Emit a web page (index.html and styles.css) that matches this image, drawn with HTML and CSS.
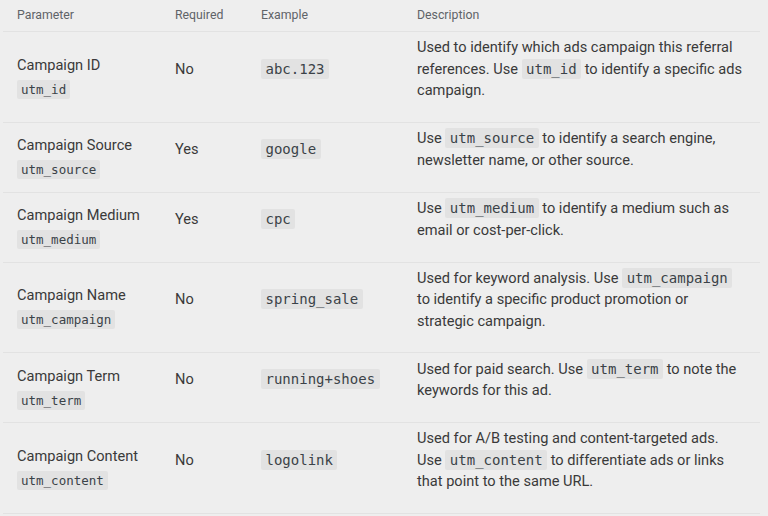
FILE: index.html
```html
<!DOCTYPE html>
<html lang="en">
<head>
<meta charset="utf-8">
<title>Campaign URL parameters</title>
<link rel="stylesheet" href="styles.css">
</head>
<body>
<table class="params">
  <colgroup>
    <col class="c-param">
    <col class="c-req">
    <col class="c-ex">
    <col class="c-desc">
  </colgroup>
  <thead>
    <tr>
      <th>Parameter</th>
      <th>Required</th>
      <th>Example</th>
      <th>Description</th>
    </tr>
  </thead>
  <tbody>
    <tr>
      <td class="param"><div class="name">Campaign ID</div><div class="key"><code>utm_id</code></div></td>
      <td>No</td>
      <td><code class="ex">abc.123</code></td>
      <td>Used to identify which ads campaign this referral references. Use <code>utm_id</code> to identify a specific ads campaign.</td>
    </tr>
    <tr>
      <td class="param"><div class="name">Campaign Source</div><div class="key"><code>utm_source</code></div></td>
      <td>Yes</td>
      <td><code class="ex">google</code></td>
      <td>Use <code>utm_source</code> to identify a search engine, newsletter name, or other source.</td>
    </tr>
    <tr>
      <td class="param"><div class="name">Campaign Medium</div><div class="key"><code>utm_medium</code></div></td>
      <td>Yes</td>
      <td><code class="ex">cpc</code></td>
      <td>Use <code>utm_medium</code> to identify a medium such as email or cost-per-click.</td>
    </tr>
    <tr>
      <td class="param"><div class="name">Campaign Name</div><div class="key"><code>utm_campaign</code></div></td>
      <td>No</td>
      <td><code class="ex">spring_sale</code></td>
      <td>Used for keyword analysis. Use <code>utm_campaign</code> to identify a specific product promotion or strategic campaign.</td>
    </tr>
    <tr>
      <td class="param"><div class="name">Campaign Term</div><div class="key"><code>utm_term</code></div></td>
      <td>No</td>
      <td><code class="ex">running+shoes</code></td>
      <td>Used for paid search. Use <code>utm_term</code> to note the keywords for this ad.</td>
    </tr>
    <tr>
      <td class="param"><div class="name">Campaign Content</div><div class="key"><code>utm_content</code></div></td>
      <td>No</td>
      <td><code class="ex">logolink</code></td>
      <td>Used for A/B testing and content-targeted ads. Use <code>utm_content</code> to differentiate ads or links that point to the same URL.</td>
    </tr>
  </tbody>
</table>
</body>
</html>
```

FILE: styles.css
```css
html, body {
  margin: 0;
  padding: 0;
  background: #eeeeee;
}

body {
  font-family: Roboto, "Liberation Sans", sans-serif;
  color: #3a3a3a;
  font-size: 14.6px;
  line-height: 21.5px;
}

.params {
  margin-left: 3px;
  width: 757px;
  table-layout: fixed;
  border-collapse: collapse;
  border-spacing: 0;
}

.c-param { width: 158px; }
.c-req { width: 86px; }
.c-ex { width: 156px; }
.c-desc { width: 357px; }

.params th {
  text-align: left;
  font-weight: 400;
  font-size: 12.3px;
  line-height: 16px;
  color: #5f6368;
  padding: 7px 14px 8px;
  border-bottom: 1px solid #e2e2e2;
}

.params td {
  vertical-align: middle;
  padding: 5px 14px 20px;
  border-bottom: 1px solid #e2e2e2;
}

.params td.param {
  padding: 12.5px 14px;
}

.name {
  line-height: 21px;
}

.key {
  margin-top: 4px;
  line-height: 19px;
}

code {
  font-family: "DejaVu Sans Mono", "Liberation Mono", monospace;
  font-size: 14px;
  color: #3b4248;
  background: #e2e2e2;
  padding: 2px 4.5px;
  border-radius: 2px;
}

.key code {
  display: inline-block;
  font-size: 12.5px;
  line-height: 15px;
  padding: 2px 4px;
}
```
